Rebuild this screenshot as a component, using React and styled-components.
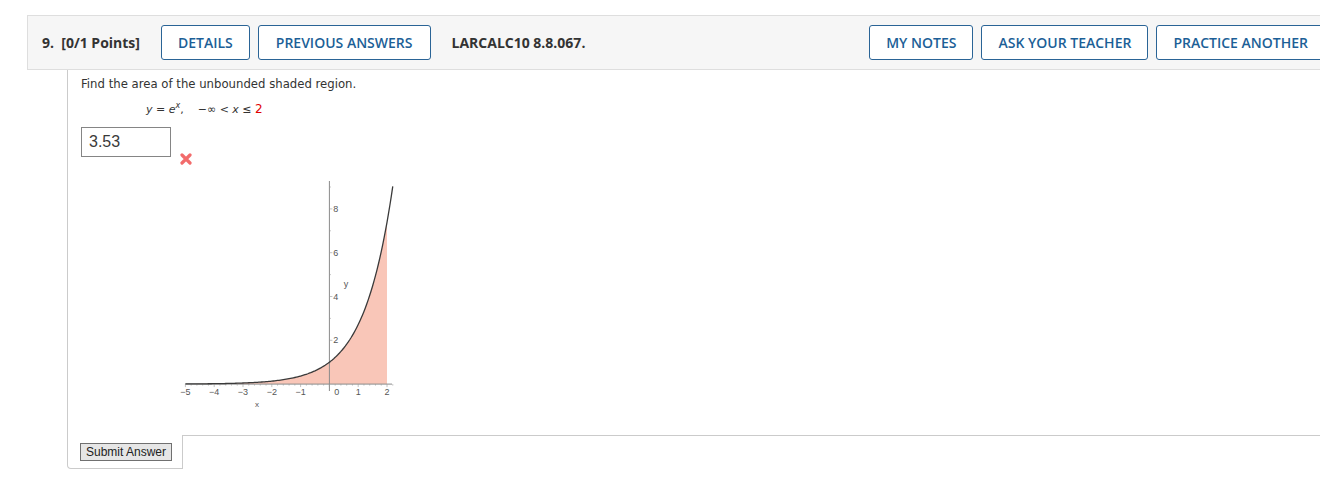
import React from "react";
import styled, { createGlobalStyle } from "styled-components";

const GlobalStyle = createGlobalStyle`
  html, body {
    margin: 0;
    padding: 0;
    background: #fff;
    overflow: hidden;
  }
  body {
    font-family: "Open Sans", "DejaVu Sans", sans-serif;
    color: #333;
  }
`;

const Page = styled.div`
  width: 1312px;
  padding: 15px 0 0 27px;
`;

const Header = styled.div`
  display: flex;
  align-items: center;
  background: #f6f6f6;
  border: 1px solid #dedede;
  border-right: none;
  padding: 9px 0 9px 14px;
`;

const Label = styled.span`
  font-family: "Open Sans", sans-serif;
  font-weight: 700;
  font-size: 14px;
  color: #333;
  white-space: pre;
  margin-right: ${(p) => p.$gap || 0}px;
`;

const Group = styled.div`
  display: flex;
  gap: 8px;
  margin-left: ${(p) => (p.$right ? "auto" : "0")};
  margin-right: ${(p) => (p.$right ? 14 : 21)}px;
`;

const HeadButton = styled.button`
  height: 35px;
  padding: 0 ${(p) => (p.$wide ? 17 : 16)}px;
  background: #fff;
  border: 1px solid #2a6496;
  border-radius: 3px;
  font-family: "Open Sans", sans-serif;
  font-weight: 600;
  font-size: 14px;
  color: #1c5f97;
  cursor: pointer;
`;

const Question = styled.div`
  margin-left: 40px;
`;

const Body = styled.div`
  border-left: 1px solid #cbcbcb;
  padding: 7px 0 24px 13px;
`;

const Prompt = styled.div`
  font-family: "DejaVu Sans", Verdana, sans-serif;
  font-size: 11.7px;
  line-height: 14px;
  color: #333;
`;

const Equation = styled.div`
  margin-top: 11px;
  padding-left: 65px;
  font-family: "DejaVu Sans", Verdana, sans-serif;
  font-size: 11px;
  line-height: 14px;
  color: #333;
  white-space: pre;
`;

const Var = styled.i`
  font-style: italic;
`;

const Sup = styled.sup`
  font-size: 8px;
  font-style: italic;
  vertical-align: 5px;
  line-height: 0;
`;

const Red = styled.span`
  color: #e00000;
  font-size: 12px;
`;

const AnswerRow = styled.div`
  display: flex;
  align-items: flex-start;
  margin-top: 10px;
`;

const AnswerBox = styled.div`
  width: 81px;
  height: 28px;
  padding-left: 7px;
  border: 1px solid #858585;
  font-family: "Liberation Sans", Arial, sans-serif;
  font-size: 16px;
  line-height: 28px;
  color: #3a3a3a;
`;

const Wrong = styled.svg`
  margin: 26px 0 0 9px;
  display: block;
`;

const Graph = styled.svg`
  display: block;
  margin: 11px 0 0 94px;
  font-family: "Liberation Sans", Arial, sans-serif;
`;

const Footer = styled.div`
  display: flex;
`;

const Tab = styled.div`
  display: flex;
  align-items: flex-start;
  width: 102px;
  height: 25px;
  padding: 8px 0 0 12px;
  border: 1px solid #cbcbcb;
  border-top: none;
  border-bottom-left-radius: 4px;
`;

const Rule = styled.div`
  flex: 1;
  border-top: 1px solid #cbcbcb;
  margin-left: -1px;
`;

const SubmitButton = styled.button`
  height: 18px;
  padding: 0 5px;
  background: #e6e6e6;
  border: 1px solid #707070;
  font-family: "Liberation Sans", Arial, sans-serif;
  font-size: 12px;
  line-height: 14px;
  color: #222;
  cursor: pointer;
`;

const OX = 154.4;
const OY = 208.1;
const SX = 28.8;
const SY = 21.9;
const px = (x) => OX + SX * x;
const py = (y) => OY - SY * y;

function curvePoints(from, to) {
  const pts = [];
  for (let x = from; x <= to + 1e-9; x += 0.05) {
    pts.push(`${px(x).toFixed(2)},${py(Math.exp(x)).toFixed(2)}`);
  }
  return pts;
}

function ExpGraph() {
  const line = curvePoints(-5, 2.2);
  const area = curvePoints(-5, 2);
  const fill = `M${px(-5)},${OY} L${area.join(" L")} L${px(2)},${OY} Z`;
  const xs = [-5, -4, -3, -2, -1, 1, 2];
  const ys = [2, 4, 6, 8];
  const minor = [];
  for (let i = -25; i <= 11; i++) minor.push(i / 5);
  return (
    <Graph width="225" height="235" viewBox="0 0 225 235">
      <path d={fill} fill="#f9c6b8" />
      <line x1={px(-5)} y1={OY} x2={217} y2={OY} stroke="#8a8a8a" strokeWidth="1" />
      <line x1={OX} y1={5} x2={OX} y2={215} stroke="#8a8a8a" strokeWidth="1" />
      {minor.map((t) => (
        <line key={t} x1={px(t)} y1={OY} x2={px(t)} y2={OY + (Number.isInteger(t) ? 3 : 1.5)} stroke="#999" strokeWidth="0.6" />
      ))}
      {[1, 2, 3, 4, 5, 6, 7, 8, 9].map((t) => (
        <line key={t} x1={OX} y1={py(t)} x2={OX + (t % 2 === 0 ? 3 : 1.5)} y2={py(t)} stroke="#999" strokeWidth="0.6" />
      ))}
      <polyline points={line.join(" ")} fill="none" stroke="#3a3a3a" strokeWidth="1.3" />
      {xs.map((t) => (
        <text key={t} x={px(t)} y={219} fontSize="9" fill="#555" textAnchor="middle">
          {t < 0 ? `\u2212${-t}` : t}
        </text>
      ))}
      <text x={161.7} y={219} fontSize="9" fill="#555" textAnchor="middle">0</text>
      {ys.map((t) => (
        <text key={t} x={160.7} y={py(t) + 3} fontSize="9" fill="#555" textAnchor="middle">{t}</text>
      ))}
      <text x={171} y={111} fontSize="9" fill="#555" textAnchor="middle">y</text>
      <text x={82} y={231} fontSize="8" fill="#555" textAnchor="middle">x</text>
    </Graph>
  );
}

export default function App() {
  return (
    <>
      <GlobalStyle />
      <Page>
        <Header>
          <Label $gap={21}>{"9.  [0/1 Points]"}</Label>
          <Group>
            <HeadButton>DETAILS</HeadButton>
            <HeadButton $wide>PREVIOUS ANSWERS</HeadButton>
          </Group>
          <Label>LARCALC10 8.8.067.</Label>
          <Group $right>
            <HeadButton>MY NOTES</HeadButton>
            <HeadButton>ASK YOUR TEACHER</HeadButton>
            <HeadButton>PRACTICE ANOTHER</HeadButton>
          </Group>
        </Header>
        <Question>
          <Body>
            <Prompt>Find the area of the unbounded shaded region.</Prompt>
            <Equation>
              <Var>y</Var> = <Var>e</Var>
              <Sup>x</Sup>,{"    "}−∞ &lt; <Var>x</Var> ≤ <Red>2</Red>
            </Equation>
            <AnswerRow>
              <AnswerBox>3.53</AnswerBox>
              <Wrong width="12" height="12" viewBox="0 0 12 12">
                <path d="M2 2 L10 10 M10 2 L2 10" stroke="#f26b6b" strokeWidth="3.2" strokeLinecap="round" />
              </Wrong>
            </AnswerRow>
            <ExpGraph />
          </Body>
          <Footer>
            <Tab>
              <SubmitButton>Submit Answer</SubmitButton>
            </Tab>
            <Rule />
          </Footer>
        </Question>
      </Page>
    </>
  );
}
